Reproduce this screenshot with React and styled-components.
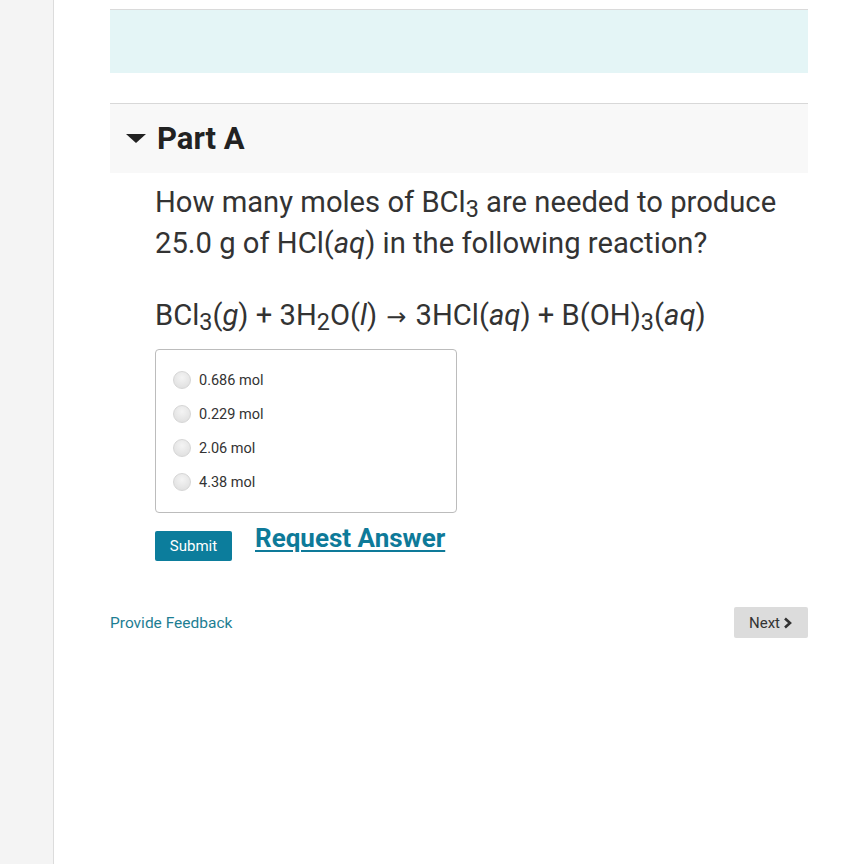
import React from 'react';
import styled, { createGlobalStyle } from 'styled-components';

const GlobalStyle = createGlobalStyle`
    body {
        margin: 0;
        background: #fff;
        font-family: Roboto, "Liberation Sans", sans-serif;
        color: #222;
    }
`;

// Styled Components
const Page = styled.div`
    display: flex;
    min-height: 864px;
`;

const Sidebar = styled.div`
    width: 53px;
    flex-shrink: 0;
    background: #f4f4f4;
    border-right: 1px solid #dcdcdc;
`;

const Main = styled.div`
    width: 698px;
    padding: 9px 0 0 56px;
`;

const Banner = styled.div`
    height: 63px;
    background: #e4f5f6;
    border-top: 1px solid #dadada;
`;

const PartHeader = styled.div`
    margin-top: 30px;
    height: 69px;
    background: #f8f8f8;
    border-top: 1px solid #d8d8d8;
    display: flex;
    align-items: center;
    padding-left: 16px;
    gap: 11px;
`;

const Caret = styled.span`
    width: 0;
    height: 0;
    border-left: 10px solid transparent;
    border-right: 10px solid transparent;
    border-top: 9px solid #222;
`;

const PartTitle = styled.h2`
    margin: 0;
    font-size: 31px;
    font-weight: 700;
    color: #222;
`;

const Body = styled.div`
    padding-left: 45px;
`;

const Question = styled.p`
    margin: 9px 0 0;
    max-width: 640px;
    font-size: 29.2px;
    line-height: 41px;
    color: #333;
`;

const Equation = styled(Question)`
    margin-top: 31px;
`;

const Sub = styled.sub`
    font-size: 0.8em;
    line-height: 0;
    vertical-align: -0.22em;
`;

const Arrow = styled.span`
    font-family: "DejaVu Sans", sans-serif;
    font-size: 0.82em;
    padding: 0 2px;
`;

const Choices = styled.div`
    margin-top: 11px;
    width: 302px;
    height: 164px;
    border: 1px solid #bcbcbc;
    border-radius: 4px;
    padding: 21px 0 0 17px;
    box-sizing: border-box;
    display: flex;
    flex-direction: column;
    gap: 16px;
`;

const Choice = styled.label`
    display: flex;
    align-items: center;
    gap: 8px;
    height: 18px;
    font-size: 14.5px;
    color: #333;
`;

const Radio = styled.span`
    width: 18px;
    height: 18px;
    border-radius: 50%;
    box-sizing: border-box;
    border: 1px solid #d6d6d6;
    background: radial-gradient(circle at 50% 35%, #f4f4f4, #dcdcdc);
`;

const Actions = styled.div`
    margin-top: 17px;
    display: flex;
    align-items: flex-start;
    gap: 23px;
`;

const SubmitButton = styled.button`
    width: 77px;
    height: 30px;
    border: none;
    border-radius: 2px;
    background: #0c7d9c;
    color: #fff;
    font-family: Roboto, "Liberation Sans", sans-serif;
    font-size: 15px;
    margin-top: 1px;
`;

const RequestLink = styled.a`
    margin-top: -6px;
    font-size: 26px;
    font-weight: 700;
    color: #0e7a99;
    text-decoration: underline;
    text-decoration-thickness: 2px;
    text-underline-offset: 3px;
    line-height: 28px;
`;

const Footer = styled.div`
    margin-top: 46px;
    display: flex;
    justify-content: space-between;
    align-items: center;
`;

const FeedbackLink = styled.a`
    font-size: 15.5px;
    color: #1d7e93;
`;

const NextButton = styled.button`
    width: 74px;
    height: 31px;
    border: none;
    border-radius: 2px;
    background: #dcdcdc;
    color: #333;
    font-family: Roboto, "Liberation Sans", sans-serif;
    font-size: 15px;
    display: flex;
    align-items: center;
    justify-content: center;
    gap: 3px;
`;

const answers = ['0.686 mol', '0.229 mol', '2.06 mol', '4.38 mol'];

export default function App() {
    return (
        <Page>
            <GlobalStyle />
            <Sidebar />
            <Main>
                <Banner />
                <PartHeader>
                    <Caret />
                    <PartTitle>Part A</PartTitle>
                </PartHeader>
                <Body>
                    <Question>
                        How many moles of BCl<Sub>3</Sub> are needed to produce 25.0 g of HCl(<i>aq</i>) in the following reaction?
                    </Question>
                    <Equation>
                        BCl<Sub>3</Sub>(<i>g</i>) + 3H<Sub>2</Sub>O(<i>l</i>) <Arrow>→</Arrow> 3HCl(<i>aq</i>) + B(OH)<Sub>3</Sub>(<i>aq</i>)
                    </Equation>
                    <Choices>
                        {answers.map((a) => (
                            <Choice key={a}>
                                <Radio />
                                {a}
                            </Choice>
                        ))}
                    </Choices>
                    <Actions>
                        <SubmitButton>Submit</SubmitButton>
                        <RequestLink href="#">Request Answer</RequestLink>
                    </Actions>
                </Body>
                <Footer>
                    <FeedbackLink>Provide Feedback</FeedbackLink>
                    <NextButton>
                        Next
                        <svg width="10" height="12" viewBox="0 0 10 12">
                            <path d="M2 1.5 L7 6 L2 10.5" fill="none" stroke="#333" strokeWidth="2.6" />
                        </svg>
                    </NextButton>
                </Footer>
            </Main>
        </Page>
    );
}
